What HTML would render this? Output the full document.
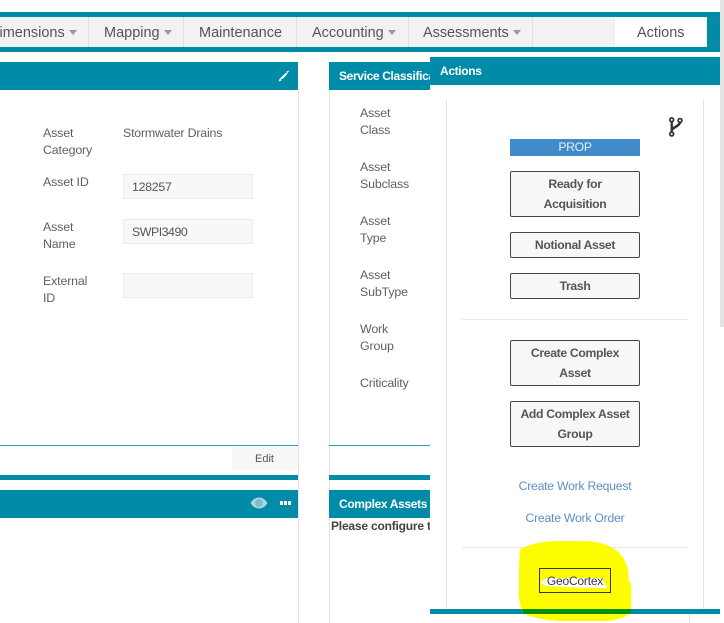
<!DOCTYPE html>
<html>
<head>
<meta charset="utf-8">
<style>
html,body{margin:0;padding:0;background:#fff;}
body{width:724px;height:623px;position:relative;overflow:hidden;font-family:"Liberation Sans",sans-serif;color:#555;}
.a{position:absolute;white-space:nowrap;}
.teal{background:#008ba8;}
.nav{font-size:14.5px;color:#555;top:25px;line-height:16px;}
.caret{display:inline-block;width:0;height:0;border-left:4.5px solid transparent;border-right:4.5px solid transparent;border-top:5px solid #9a9a9a;vertical-align:2px;margin-left:4px;}
.sep{top:17px;width:1px;height:30px;background:#e2e2e4;}
.lab{font-size:12.4px;line-height:17px;color:#5f5f5f;letter-spacing:-.15px;}
.inp{left:123px;width:128px;height:23px;background:#f8f8f8;border:1px solid #ebebeb;font-size:12.4px;line-height:24px;color:#555;text-indent:8px;}
.hd{color:#fff;font-weight:bold;font-size:12px;line-height:14px;letter-spacing:-.35px;}
.btn{left:510px;width:128px;background:#f7f7f7;border:1px solid #444;border-radius:2px;text-align:center;font-size:12.2px;font-weight:bold;color:#555;line-height:20px;white-space:normal;letter-spacing:-.33px;}
.lnk{left:446px;width:258px;text-align:center;font-size:12.2px;color:#5b8fc4;line-height:14px;letter-spacing:-.22px;}
.v{width:1px;background:#e4e4e6;}
</style>
</head>
<body>
<!-- scrollbar -->
<div class="a" style="left:720px;top:0;width:4px;height:327px;background:#e3e3e3"></div>

<!-- nav -->
<div class="a teal" style="left:0;top:12px;width:720px;height:40px"></div>
<div class="a" style="left:0;top:17px;width:707px;height:30px;background:#f2f2f4"></div>
<div class="a" style="left:615px;top:17px;width:91px;height:30px;background:#fff"></div>
<div class="a sep" style="left:88px"></div>
<div class="a sep" style="left:183px"></div>
<div class="a sep" style="left:296px"></div>
<div class="a sep" style="left:408px"></div>
<div class="a sep" style="left:532px"></div>
<div class="a nav" style="left:-11px">Dimensions<span class="caret"></span></div>
<div class="a nav" style="left:104px">Mapping<span class="caret"></span></div>
<div class="a nav" style="left:199px">Maintenance</div>
<div class="a nav" style="left:312px">Accounting<span class="caret"></span></div>
<div class="a nav" style="left:423px;letter-spacing:-.05px">Assessments<span class="caret"></span></div>
<div class="a nav" style="left:637px">Actions</div>

<!-- left panel -->
<div class="a teal" style="left:0;top:62px;width:298px;height:28px"></div>
<svg class="a" style="left:278px;top:70px" width="12" height="12" viewBox="0 0 12 12" fill="#fff"><path d="M11.500 .5 8.500 1.500 9 2.500 7 3.500 4 6.500 1.500 9 .5 11.500 3.500 10.500 3 9.500 5 8.500 8 5.500 9.500 3z"/></svg>
<div class="a v" style="left:298px;top:90px;height:533px"></div>

<div class="a lab" style="left:43px;top:125px">Asset<br>Category</div>
<div class="a lab" style="left:123px;top:125px;letter-spacing:-.2px">Stormwater Drains</div>
<div class="a lab" style="left:43px;top:174px">Asset ID</div>
<div class="a inp" style="top:174px;letter-spacing:-.3px">128257</div>
<div class="a lab" style="left:43px;top:219px">Asset<br>Name</div>
<div class="a inp" style="top:219px;letter-spacing:-.5px">SWPI3490</div>
<div class="a lab" style="left:43px;top:273px">External<br>ID</div>
<div class="a inp" style="top:273px"></div>

<div class="a" style="left:0;top:445px;width:298px;height:1px;background:#2f9db6"></div>
<div class="a" style="left:232px;top:447px;width:66px;height:23px;background:#f7f7f8"></div>
<div class="a" style="left:255px;top:452px;font-size:11px;line-height:14px;color:#555">Edit</div>
<div class="a teal" style="left:0;top:475px;width:298px;height:5px"></div>

<div class="a teal" style="left:0;top:490px;width:298px;height:28px"></div>
<svg class="a" style="left:250px;top:497px" width="18" height="12" viewBox="0 0 18 12"><path d="M.5 6C3 2 6 .5 9 .5S15 2 17.500 6C15 10 12 11.500 9 11.500S3 10 .5 6z" fill="#a9d6e0"/><circle cx="9" cy="6" r="4" fill="#7fbccb"/></svg>
<div class="a" style="left:280px;top:501px;width:3px;height:4px;background:#fff"></div>
<div class="a" style="left:284px;top:501px;width:3px;height:4px;background:#fff"></div>
<div class="a" style="left:288px;top:501px;width:3px;height:4px;background:#fff"></div>

<!-- middle panel -->
<div class="a teal" style="left:329px;top:62px;width:101px;height:28px"></div>
<div class="a hd" style="left:339px;top:69px;width:91px;overflow:hidden">Service Classification</div>
<div class="a v" style="left:329px;top:90px;height:533px"></div>
<div class="a lab" style="left:360px;top:105px">Asset<br>Class</div>
<div class="a lab" style="left:360px;top:159px">Asset<br>Subclass</div>
<div class="a lab" style="left:360px;top:213px">Asset<br>Type</div>
<div class="a lab" style="left:360px;top:267px">Asset<br>SubType</div>
<div class="a lab" style="left:360px;top:321px">Work<br>Group</div>
<div class="a lab" style="left:360px;top:375px">Criticality</div>
<div class="a" style="left:329px;top:445px;width:101px;height:1px;background:#2f9db6"></div>
<div class="a teal" style="left:329px;top:475px;width:101px;height:5px"></div>
<div class="a teal" style="left:329px;top:490px;width:101px;height:28px"></div>
<div class="a hd" style="left:339px;top:497px">Complex Assets</div>
<div class="a" style="left:331px;top:519px;width:99px;overflow:hidden;font-size:12px;line-height:14px;font-weight:bold;color:#444;letter-spacing:-.2px">Please configure the</div>

<!-- modal -->
<div class="a" style="left:430px;top:85px;width:290px;height:524px;background:#fff"></div>
<div class="a teal" style="left:430px;top:57px;width:290px;height:28px"></div>
<div class="a hd" style="left:440px;top:64px">Actions</div>
<div class="a v" style="left:446px;top:100px;height:509px"></div>
<div class="a v" style="left:703px;top:100px;height:509px"></div>

<svg class="a" style="left:667px;top:115px" width="18" height="22" viewBox="0 0 18 22" fill="none" stroke="#333" stroke-width="1.700"><circle cx="4.700" cy="4.800" r="1.900"/><circle cx="13" cy="5.500" r="1.900"/><circle cx="4.700" cy="19" r="1.900"/><path d="M4.700 6.700v10.400" stroke-width="2.400"/><path stroke-width="2.600" d="M5 15c1-3 7-3.500 8-7.600"/></svg>

<div class="a" style="left:510px;top:139px;width:130px;height:17px;background:#428bca;color:#e8f0f8;text-align:center;font-size:12.2px;line-height:16px;letter-spacing:-.3px">PROP</div>
<div class="a btn" style="top:171px;height:44px"><div style="padding-top:2px">Ready for<br>Acquisition</div></div>
<div class="a btn" style="top:232px;height:24px;line-height:24px">Notional Asset</div>
<div class="a btn" style="top:273px;height:24px;line-height:24px">Trash</div>
<div class="a" style="left:462px;top:319px;width:226px;height:1px;background:#ececec"></div>
<div class="a btn" style="top:340px;height:44px"><div style="padding-top:2px">Create Complex<br>Asset</div></div>
<div class="a btn" style="top:401px;height:44px"><div style="padding-top:2px">Add Complex Asset<br>Group</div></div>
<div class="a lnk" style="top:479px">Create Work Request</div>
<div class="a lnk" style="top:511px">Create Work Order</div>
<div class="a" style="left:462px;top:547px;width:226px;height:1px;background:#e8e8e8"></div>

<!-- bottom teal modal border -->
<div class="a teal" style="left:430px;top:609px;width:290px;height:5px"></div>
<div class="a v" style="left:689px;top:614px;height:9px"></div>

<!-- yellow highlight -->
<svg class="a" style="left:516px;top:538px" width="118" height="85" viewBox="0 0 118 85">
<path d="M4 11C14 6 26 4 37 3L71 3C84 4 94 7 101 13C107 18 110 24 112 31L113 44 115 45 115 75C108 80 100 82 91 83L44 83C30 82 16 80 7 75C3 65 2 57 3 48C3 35 3 22 4 11z" fill="#fdfd00"/>
<path d="M6 71H115V76H7z" fill="#069006"/>
</svg>
<div class="a" style="left:539px;top:568px;width:70px;height:23px;border:1px solid #333;"></div>
<svg class="a" style="left:540px;top:570px" width="70" height="23" viewBox="0 0 70 23"><path d="M0 13C3 10 6 8 10 8L60 8C63 9 65 13 67 18 50 18 20 17 7 16 4 15 2 14 0 13z" fill="#fff"/></svg>
<div class="a" style="left:539px;top:574px;width:72px;text-align:center;font-size:12px;line-height:14px;color:#3a3a3a;letter-spacing:-.2px">GeoCortex</div>
</body>
</html>
